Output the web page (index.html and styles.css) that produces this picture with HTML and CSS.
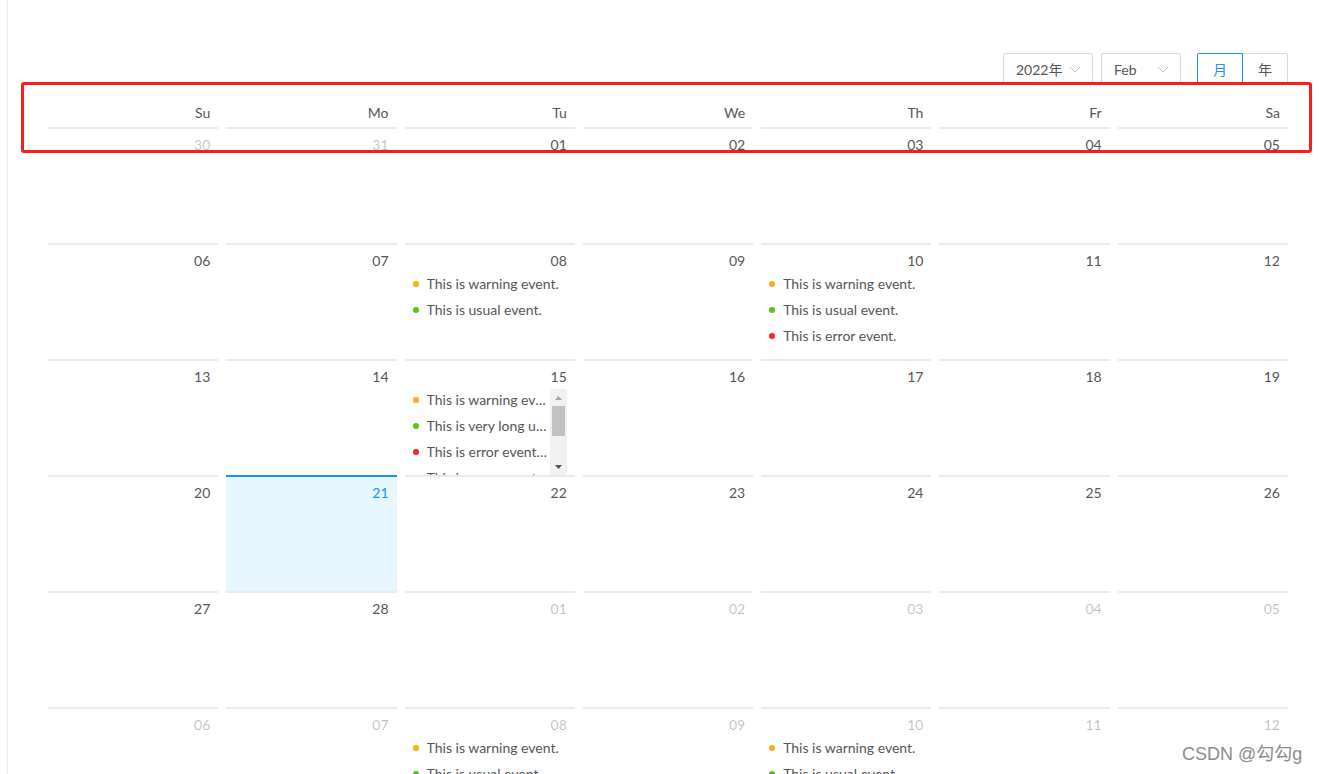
FILE: index.html
```html
<!DOCTYPE html>
<html lang="zh-CN">
<head>
<meta charset="utf-8">
<title>Calendar</title>
<link rel="stylesheet" href="styles.css">
</head>
<body>
<div class="page">
  <div class="edge"></div>
  <main class="main">
    <div class="cal-header">
      <div class="select year"><span>2022年</span><svg class="arrow" viewBox="0 0 12 12"><path d="M1 4 L6 9 L11 4" fill="none" stroke="#bfbfbf" stroke-width="1"/></svg></div>
      <div class="select month"><span>Feb</span><svg class="arrow" viewBox="0 0 12 12"><path d="M1 4 L6 9 L11 4" fill="none" stroke="#bfbfbf" stroke-width="1"/></svg></div>
      <div class="mode"><span class="rb first">月</span><span class="rb last">年</span></div>
    </div>
    <div class="grid">
      <div class="wd">Su</div><div class="wd">Mo</div><div class="wd">Tu</div><div class="wd">We</div><div class="wd">Th</div><div class="wd">Fr</div><div class="wd">Sa</div>

      <div class="cell dim"><div class="val">30</div><div class="content"></div></div>
      <div class="cell dim"><div class="val">31</div><div class="content"></div></div>
      <div class="cell"><div class="val">01</div><div class="content"></div></div>
      <div class="cell"><div class="val">02</div><div class="content"></div></div>
      <div class="cell"><div class="val">03</div><div class="content"></div></div>
      <div class="cell"><div class="val">04</div><div class="content"></div></div>
      <div class="cell"><div class="val">05</div><div class="content"></div></div>

      <div class="cell"><div class="val">06</div><div class="content"></div></div>
      <div class="cell"><div class="val">07</div><div class="content"></div></div>
      <div class="cell"><div class="val">08</div><div class="content"><ul class="events">
        <li><span class="dot warning"></span><span class="txt">This is warning event.</span></li>
        <li><span class="dot success"></span><span class="txt">This is usual event.</span></li>
      </ul></div></div>
      <div class="cell"><div class="val">09</div><div class="content"></div></div>
      <div class="cell"><div class="val">10</div><div class="content"><ul class="events">
        <li><span class="dot warning"></span><span class="txt">This is warning event.</span></li>
        <li><span class="dot success"></span><span class="txt">This is usual event.</span></li>
        <li><span class="dot error"></span><span class="txt">This is error event.</span></li>
      </ul></div></div>
      <div class="cell"><div class="val">11</div><div class="content"></div></div>
      <div class="cell"><div class="val">12</div><div class="content"></div></div>

      <div class="cell"><div class="val">13</div><div class="content"></div></div>
      <div class="cell"><div class="val">14</div><div class="content"></div></div>
      <div class="cell"><div class="val">15</div><div class="content scroll"><ul class="events">
        <li><span class="dot warning"></span><span class="txt">This is warning event</span></li>
        <li><span class="dot success"></span><span class="txt">This is very long usual event。。....</span></li>
        <li><span class="dot error"></span><span class="txt">This is error event 1.</span></li>
        <li><span class="dot error"></span><span class="txt">This is error event 2.</span></li>
        <li><span class="dot error"></span><span class="txt">This is error event 3.</span></li>
        <li><span class="dot error"></span><span class="txt">This is error event 4.</span></li>
      </ul><div class="sb"><div class="sb-btn"><svg width="7" height="4" viewBox="0 0 7 4"><path d="M0 4 L3.5 0 L7 4 Z" fill="#a3a3a3"/></svg></div><div class="sb-thumb"></div><div class="sb-fill"></div><div class="sb-btn"><svg width="7" height="4" viewBox="0 0 7 4"><path d="M0 0 L7 0 L3.5 4 Z" fill="#505050"/></svg></div></div></div></div>
      <div class="cell"><div class="val">16</div><div class="content"></div></div>
      <div class="cell"><div class="val">17</div><div class="content"></div></div>
      <div class="cell"><div class="val">18</div><div class="content"></div></div>
      <div class="cell"><div class="val">19</div><div class="content"></div></div>

      <div class="cell"><div class="val">20</div><div class="content"></div></div>
      <div class="cell today"><div class="val">21</div><div class="content"></div></div>
      <div class="cell"><div class="val">22</div><div class="content"></div></div>
      <div class="cell"><div class="val">23</div><div class="content"></div></div>
      <div class="cell"><div class="val">24</div><div class="content"></div></div>
      <div class="cell"><div class="val">25</div><div class="content"></div></div>
      <div class="cell"><div class="val">26</div><div class="content"></div></div>

      <div class="cell"><div class="val">27</div><div class="content"></div></div>
      <div class="cell"><div class="val">28</div><div class="content"></div></div>
      <div class="cell dim"><div class="val">01</div><div class="content"></div></div>
      <div class="cell dim"><div class="val">02</div><div class="content"></div></div>
      <div class="cell dim"><div class="val">03</div><div class="content"></div></div>
      <div class="cell dim"><div class="val">04</div><div class="content"></div></div>
      <div class="cell dim"><div class="val">05</div><div class="content"></div></div>

      <div class="cell dim"><div class="val">06</div><div class="content"></div></div>
      <div class="cell dim"><div class="val">07</div><div class="content"></div></div>
      <div class="cell dim"><div class="val">08</div><div class="content"><ul class="events">
        <li><span class="dot warning"></span><span class="txt">This is warning event.</span></li>
        <li><span class="dot success"></span><span class="txt">This is usual event.</span></li>
      </ul></div></div>
      <div class="cell dim"><div class="val">09</div><div class="content"></div></div>
      <div class="cell dim"><div class="val">10</div><div class="content"><ul class="events">
        <li><span class="dot warning"></span><span class="txt">This is warning event.</span></li>
        <li><span class="dot success"></span><span class="txt">This is usual event.</span></li>
        <li><span class="dot error"></span><span class="txt">This is error event.</span></li>
      </ul></div></div>
      <div class="cell dim"><div class="val">11</div><div class="content"></div></div>
      <div class="cell dim"><div class="val">12</div><div class="content"></div></div>
    </div>
  </main>
  <div class="annot"></div>
  <div class="wm">CSDN @勾勾g</div>
</div>
</body>
</html>
```

FILE: styles.css
```css
html, body {
  margin: 0;
  height: 100%;
  overflow: hidden;
  background: #fff;
}
body {
  font-family: Lato, "Noto Sans CJK SC", sans-serif;
  font-size: 14px;
  color: #555;
}
.page {
  display: flex;
  height: 100%;
  position: relative;
}
.edge {
  flex: none;
  width: 7px;
  border-right: 1px solid #ececec;
}
.main {
  flex: 1;
  padding: 0 27px 0 36px;
}
.cal-header {
  display: flex;
  justify-content: flex-end;
  align-items: center;
  padding: 53px 4px 19px 0;
}
.select {
  box-sizing: border-box;
  height: 32px;
  border: 1px solid #d9d9d9;
  border-radius: 2px;
  display: flex;
  align-items: center;
  padding: 0 11px 0 12px;
}
.select.year { width: 90px; }
.select.month { width: 80px; margin-left: 8px; }
.select .arrow {
  margin-left: auto;
  width: 12px;
  height: 12px;
}
.mode {
  display: flex;
  margin-left: 16px;
}
.rb {
  box-sizing: border-box;
  height: 32px;
  line-height: 30px;
  padding: 0 15px;
  border: 1px solid #d9d9d9;
  font-family: "Noto Sans CJK SC", sans-serif;
}
.rb.first {
  border-color: #1890ff;
  color: #1890ff;
  border-radius: 2px 0 0 2px;
}
.rb.last {
  border-left: 0;
  border-radius: 0 2px 2px 0;
}
.grid {
  display: grid;
  grid-template-columns: repeat(7, 1fr);
}
.wd {
  text-align: right;
  padding: 0 12px 5px 0;
  line-height: 18px;
}
.cell {
  margin: 0 4px;
  border-top: 2px solid #ebebeb;
  padding: 4px 8px 0;
  min-width: 0;
}
.val {
  text-align: right;
  line-height: 24px;
  height: 24px;
}
.cell.dim .val { color: rgba(0, 0, 0, 0.25); }
.cell.today {
  background: #e6f7ff;
  border-top-color: #1890ff;
}
.cell.today .val { color: #1890ff; }
.content {
  height: 86px;
  overflow: hidden;
}
.content.scroll { display: flex; }
.events {
  list-style: none;
  margin: 0;
  padding: 0;
  min-width: 0;
  flex: 1;
}
.events li {
  display: flex;
  align-items: center;
  line-height: 22px;
  margin-bottom: 4px;
  white-space: nowrap;
  color: #555;
}
.dot {
  flex: none;
  width: 6px;
  height: 6px;
  border-radius: 50%;
}
.dot.warning { background: #faad14; }
.dot.success { background: #52c41a; }
.dot.error { background: #f5222d; }
.txt {
  margin-left: 8px;
  overflow: hidden;
  text-overflow: ellipsis;
}
.sb {
  flex: none;
  width: 17px;
  background: #f1f1f1;
  display: flex;
  flex-direction: column;
}
.sb-btn {
  height: 17px;
  display: flex;
  align-items: center;
  justify-content: center;
}
.sb-thumb {
  height: 30px;
  margin: 0 2px;
  background: #c1c1c1;
}
.sb-fill { flex: 1; }
.annot {
  position: absolute;
  left: 21px;
  top: 82px;
  width: 1291px;
  height: 71px;
  box-sizing: border-box;
  border: 3px solid #f81d1d;
  border-radius: 3px;
}
.wm {
  position: absolute;
  left: 1182px;
  top: 744px;
  font-family: "Liberation Sans", "Noto Sans CJK SC", sans-serif;
  font-size: 18px;
  line-height: 20px;
  color: #8c8c8c;
  white-space: nowrap;
}
```
